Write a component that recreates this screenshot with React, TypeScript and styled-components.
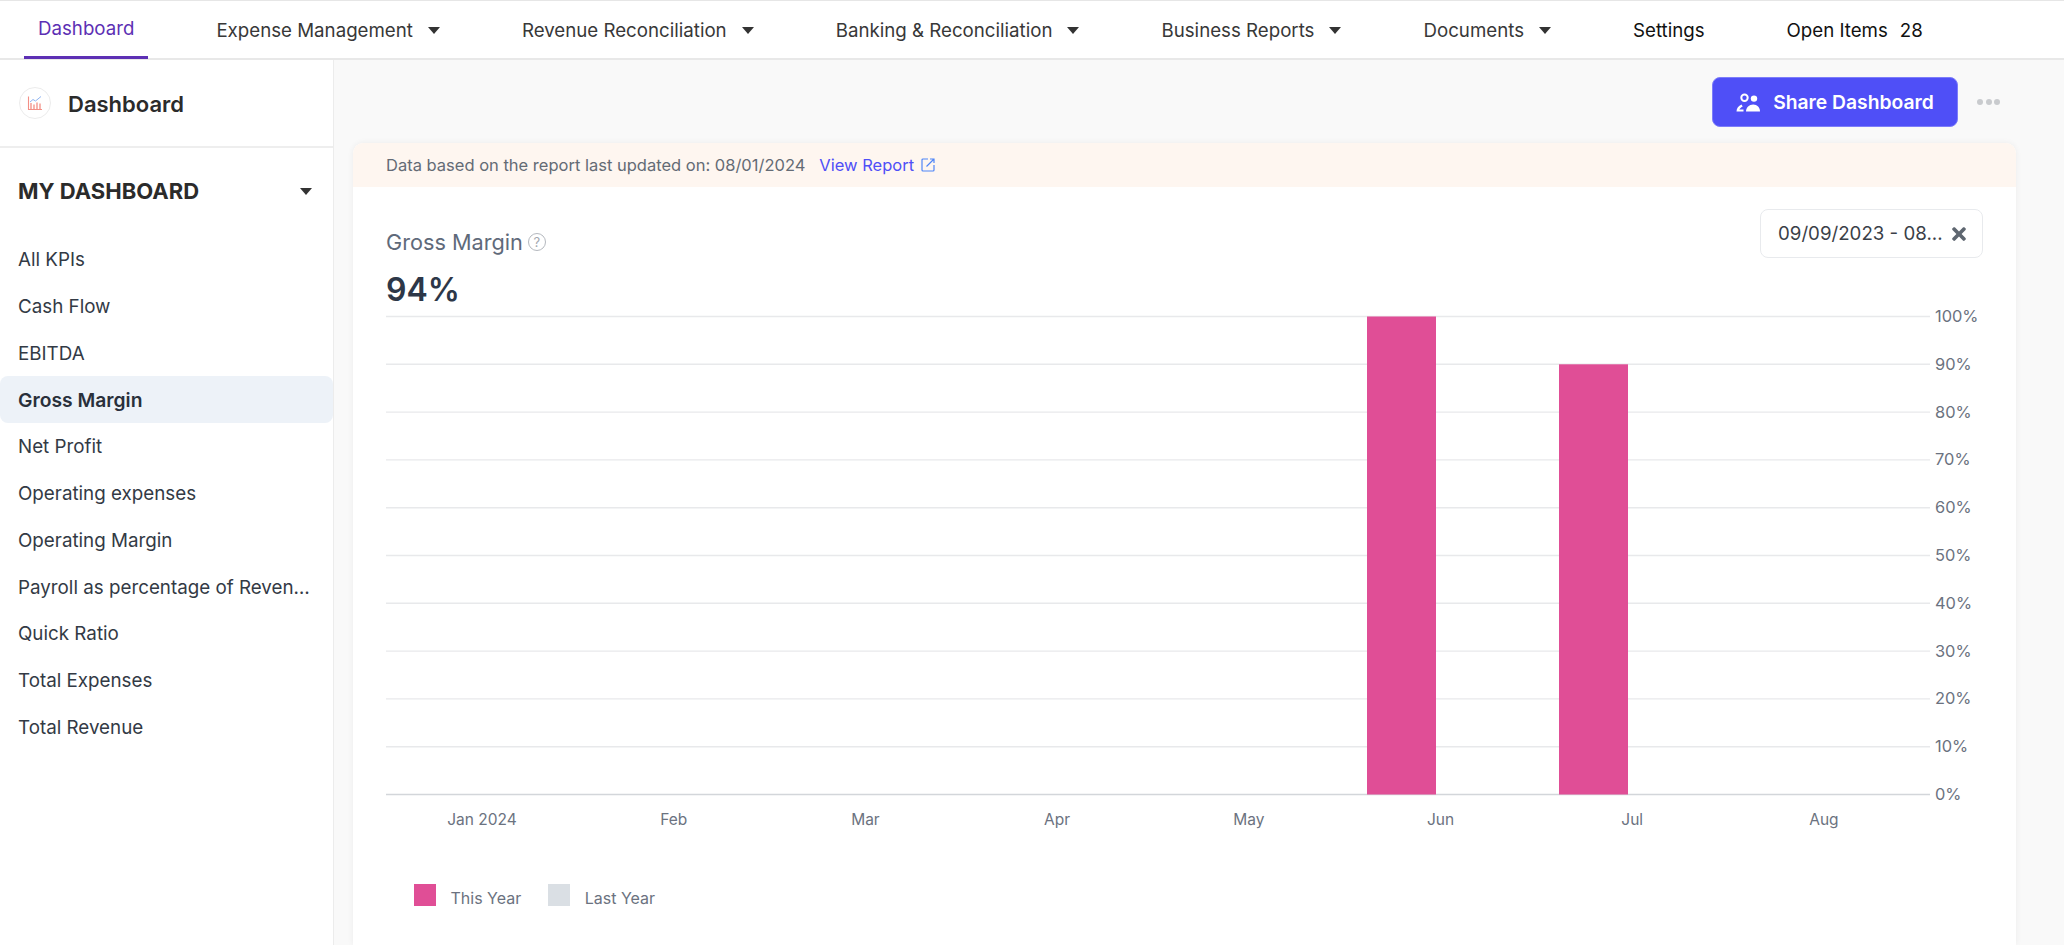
import React, { FC } from 'react'
import styled, { createGlobalStyle } from 'styled-components'
import { FaTimes } from 'react-icons/fa'

const GlobalStyle = createGlobalStyle`
  html, body {
    margin: 0;
    height: 100%;
    background: #fff;
    font-family: Inter, "Liberation Sans", sans-serif;
  }

  #root {
    height: 100%;
  }

  * {
    box-sizing: border-box;
  }
`

const Page = styled.div`
  height: 100vh;
  display: flex;
  flex-direction: column;
  overflow: hidden;
`

const TopNav = styled.nav`
  height: 60px;
  flex: none;
  display: flex;
  align-items: stretch;
  gap: 54px;
  padding-left: 24px;
  background: #fff;
  border-top: 1px solid #e6e6e6;
  border-bottom: 2px solid #e8e8e8;
`

const NavItem = styled.a<{ $active?: boolean; $dark?: boolean }>`
  display: flex;
  align-items: center;
  gap: 15px;
  padding: ${p => (p.$active ? '0 14px' : '3px 14px 0')};
  margin-bottom: -1px;
  font-size: 18.7px;
  white-space: nowrap;
  color: ${p => (p.$active ? '#5d30b4' : p.$dark ? '#111' : '#383838')};
  border-bottom: 3px solid ${p => (p.$active ? '#5d30b4' : 'transparent')};
`

const Count = styled.span`
  margin-left: 12px;
`

const Caret = styled.span`
  width: 0;
  height: 0;
  border-left: 6px solid transparent;
  border-right: 6px solid transparent;
  border-top: 7px solid #333;
`

const Body = styled.div`
  flex: 1;
  min-height: 0;
  display: flex;
`

const Sidebar = styled.aside`
  width: 334px;
  flex: none;
  background: #fff;
  border-right: 1px solid #ececec;
`

const SideHeader = styled.div`
  height: 88px;
  display: flex;
  align-items: center;
  gap: 17px;
  padding-left: 19px;
  border-bottom: 2px solid #eee;
`

const LogoCircle = styled.div`
  width: 32px;
  height: 32px;
  display: flex;
  align-items: center;
  justify-content: center;
  border: 1px solid #ececec;
  border-radius: 50%;
`

const SideTitle = styled.div`
  padding-top: 1px;
  font-size: 22px;
  font-weight: 600;
  color: #2b2b2b;
`

const SectionHead = styled.div`
  height: 44px;
  margin: 21px 0 23px;
  padding: 0 21px 0 18px;
  display: flex;
  align-items: center;
  justify-content: space-between;
  font-size: 22px;
  font-weight: 700;
  color: #2b2b2b;
`

const KpiList = styled.div`
  display: flex;
  flex-direction: column;
`

const KpiRow = styled.div<{ $active?: boolean }>`
  height: 46.8px;
  padding: 1px 20px 0 18px;
  line-height: 46.8px;
  font-size: ${p => (p.$active ? '19.3px' : '18.8px')};
  font-weight: ${p => (p.$active ? 600 : 400)};
  color: ${p => (p.$active ? '#29303b' : '#333a45')};
  background: ${p => (p.$active ? '#edf2f8' : 'transparent')};
  border-radius: 8px;
  white-space: nowrap;
  overflow: hidden;
  text-overflow: ellipsis;
`

const Main = styled.main`
  flex: 1;
  min-width: 0;
  display: flex;
  flex-direction: column;
  padding: 17px 48px 0 19px;
  background: #f9f9f9;
`

const Toolbar = styled.div`
  display: flex;
  align-items: center;
  justify-content: flex-end;
  gap: 19px;
  padding-right: 16px;
  margin-bottom: 16px;
`

const ShareButton = styled.button`
  width: 246px;
  height: 50px;
  display: flex;
  align-items: center;
  justify-content: center;
  gap: 13px;
  border: 1px solid #7d7dfa;
  border-radius: 8px;
  background: #4f4ff7;
  color: #fff;
  font-family: inherit;
  font-size: 19.3px;
  font-weight: 600;
`

const MoreDots = styled.div`
  display: flex;
  gap: 2.5px;

  span {
    width: 6px;
    height: 6px;
    border-radius: 50%;
    background: #c9cbce;
  }
`

const Card = styled.section`
  flex: 1;
  min-height: 0;
  background: #fff;
  border-radius: 10px 10px 0 0;
  box-shadow: 0 0 6px rgba(0, 0, 0, 0.06);
  overflow: hidden;
`

const Notice = styled.div`
  height: 44px;
  display: flex;
  align-items: center;
  padding-left: 33px;
  background: #fef6f0;
  font-size: 16.5px;
  color: #646b75;
`

const ViewReport = styled.a`
  display: flex;
  align-items: center;
  gap: 7px;
  margin-left: 14px;
  color: #4f4ff7;
`

const CardBody = styled.div`
  padding: 22px 33px 0;
`

const ChartHead = styled.div`
  height: 101px;
  display: flex;
  justify-content: space-between;
  align-items: flex-start;
`

const Metric = styled.div`
  padding-top: 20px;
`

const MetricName = styled.div`
  display: flex;
  align-items: center;
  gap: 5px;
  height: 26px;
  font-size: 21.7px;
  color: #5f6a7a;
`

const HelpMark = styled.span`
  width: 18px;
  height: 18px;
  display: flex;
  align-items: center;
  justify-content: center;
  border: 1px solid #b4b8be;
  border-radius: 50%;
  font-size: 13px;
  color: #a3a8af;
`

const MetricValue = styled.div`
  margin-top: 15px;
  font-size: 32px;
  line-height: 40px;
  font-weight: 600;
  color: #2d3748;
`

const DateField = styled.div`
  width: 223px;
  height: 49px;
  display: flex;
  align-items: center;
  justify-content: space-between;
  padding: 0 13px 0 17px;
  border: 1px solid #e8eaed;
  border-radius: 8px;
  font-size: 18.7px;
  color: #3a4048;
  white-space: nowrap;

  svg {
    color: #5e6670;
    flex: none;
  }
`

const ChartSvg = styled.svg`
  display: block;

  text {
    font-family: Inter, "Liberation Sans", sans-serif;
    fill: #6b7280;
  }
`

const Legend = styled.div`
  display: flex;
  align-items: flex-start;
  margin: 44px 0 0 28px;
`

const LegendItem = styled.div`
  display: flex;
  align-items: flex-start;
  gap: 14.5px;
  margin-right: 27px;
  font-size: 16px;
  line-height: 22px;
  color: #6b7280;
`

const Swatch = styled.span<{ $color: string }>`
  width: 22px;
  height: 22px;
  background: ${p => p.$color};
`

const LegendLabel = styled.span`
  padding-top: 3px;
`

const KPIS = [
  'All KPIs',
  'Cash Flow',
  'EBITDA',
  'Gross Margin',
  'Net Profit',
  'Operating expenses',
  'Operating Margin',
  'Payroll as percentage of Revenue',
  'Quick Ratio',
  'Total Expenses',
  'Total Revenue',
]

const MENUS = ['Expense Management', 'Revenue Reconciliation', 'Banking & Reconciliation', 'Business Reports', 'Documents']

const MONTHS = ['Jan 2024', 'Feb', 'Mar', 'Apr', 'May', 'Jun', 'Jul', 'Aug']

const BARS = [
  { x: 981, percent: 100 },
  { x: 1173, percent: 90 },
]

const GRID_TOP = 6.5
const GRID_STEP = 47.8
const CHART_WIDTH = 1544

const Chart: FC = () => {
  const base = GRID_TOP + GRID_STEP * 10
  return (
    <ChartSvg width={1597} height={530} viewBox="0 0 1597 530">
      {Array.from({ length: 11 }, (_, i) => {
        const y = GRID_TOP + GRID_STEP * i
        return (
          <g key={i}>
            <line x1={0} x2={CHART_WIDTH} y1={y} y2={y} stroke={i === 10 ? '#d3d6da' : '#e8e9eb'} strokeWidth={1.4} />
            <text x={1549} y={y + 5.5} fontSize={16.4}>
              {100 - i * 10}%
            </text>
          </g>
        )
      })}
      {BARS.map(bar => {
        const h = (GRID_STEP * 10 * bar.percent) / 100
        return <rect key={bar.x} x={bar.x} y={base - h} width={69} height={h} fill="#e04e96" />
      })}
      {MONTHS.map((m, i) => (
        <text key={m} x={96 + i * 191.7} y={515} fontSize={15.5} textAnchor="middle">
          {m}
        </text>
      ))}
    </ChartSvg>
  )
}

const ChartLogo: FC = () => (
  <svg width="16" height="16" viewBox="0 0 16 16" fill="none">
    <path d="M1.5 1.5V14.5H15" stroke="#f38f86" strokeWidth="1.1" />
    <path d="M4 14V8M7 14V9.5M10 14V7.5M13 14V8.5" stroke="#f38f86" strokeWidth="1.3" />
    <path d="M3 7L6 4.5L8.5 6L14 1.5" stroke="#8fb4f2" strokeWidth="1" />
  </svg>
)

const ShareIcon: FC = () => (
  <svg width="24" height="19" viewBox="0 0 24 19" fill="#fff">
    <path
      fillRule="evenodd"
      d="M8.5 0.5a4.2 4.2 0 1 1 0 8.4a4.2 4.2 0 0 1 0-8.4zm0 2a2.2 2.2 0 1 0 0 4.4a2.2 2.2 0 0 0 0-4.4z"
    />
    <circle cx="18" cy="5.6" r="3.2" />
    <path d="M0.5 18.5c0-3.2 2-5.8 5-7l1.2 1.9c-2 .9-3.2 2.4-3.4 3.2h4.2v1.9z" />
    <path d="M10 18.5c0-4 3.2-7 7.2-7s6.8 3 6.8 7z" />
  </svg>
)

const ExternalIcon: FC = () => (
  <svg width="14" height="14" viewBox="0 0 14 14" fill="none" stroke="#4f86f7" strokeWidth="1.2">
    <path d="M7 1H2a1 1 0 0 0-1 1v10a1 1 0 0 0 1 1h10a1 1 0 0 0 1-1V7" />
    <path d="M5.5 8.5L12.5 1.5M9 1h4v4" />
  </svg>
)

const App: FC = () => {
  return (
    <Page>
      <GlobalStyle />
      <TopNav>
        <NavItem $active>Dashboard</NavItem>
        {MENUS.map(menu => (
          <NavItem key={menu}>
            {menu}
            <Caret />
          </NavItem>
        ))}
        <NavItem $dark>Settings</NavItem>
        <NavItem $dark>
          <span>
            Open Items
            <Count>28</Count>
          </span>
        </NavItem>
      </TopNav>
      <Body>
        <Sidebar>
          <SideHeader>
            <LogoCircle>
              <ChartLogo />
            </LogoCircle>
            <SideTitle>Dashboard</SideTitle>
          </SideHeader>
          <SectionHead>
            MY DASHBOARD
            <Caret />
          </SectionHead>
          <KpiList>
            {KPIS.map(kpi => (
              <KpiRow key={kpi} $active={kpi === 'Gross Margin'}>
                {kpi}
              </KpiRow>
            ))}
          </KpiList>
        </Sidebar>
        <Main>
          <Toolbar>
            <ShareButton>
              <ShareIcon />
              Share Dashboard
            </ShareButton>
            <MoreDots>
              <span />
              <span />
              <span />
            </MoreDots>
          </Toolbar>
          <Card>
            <Notice>
              Data based on the report last updated on: 08/01/2024
              <ViewReport>
                View Report
                <ExternalIcon />
              </ViewReport>
            </Notice>
            <CardBody>
              <ChartHead>
                <Metric>
                  <MetricName>
                    Gross Margin
                    <HelpMark>?</HelpMark>
                  </MetricName>
                  <MetricValue>94%</MetricValue>
                </Metric>
                <DateField>
                  09/09/2023 - 08...
                  <FaTimes size={20} />
                </DateField>
              </ChartHead>
              <Chart />
              <Legend>
                <LegendItem>
                  <Swatch $color="#e04e96" />
                  <LegendLabel>This Year</LegendLabel>
                </LegendItem>
                <LegendItem>
                  <Swatch $color="#dadfe4" />
                  <LegendLabel>Last Year</LegendLabel>
                </LegendItem>
              </Legend>
            </CardBody>
          </Card>
        </Main>
      </Body>
    </Page>
  )
}

export default App
